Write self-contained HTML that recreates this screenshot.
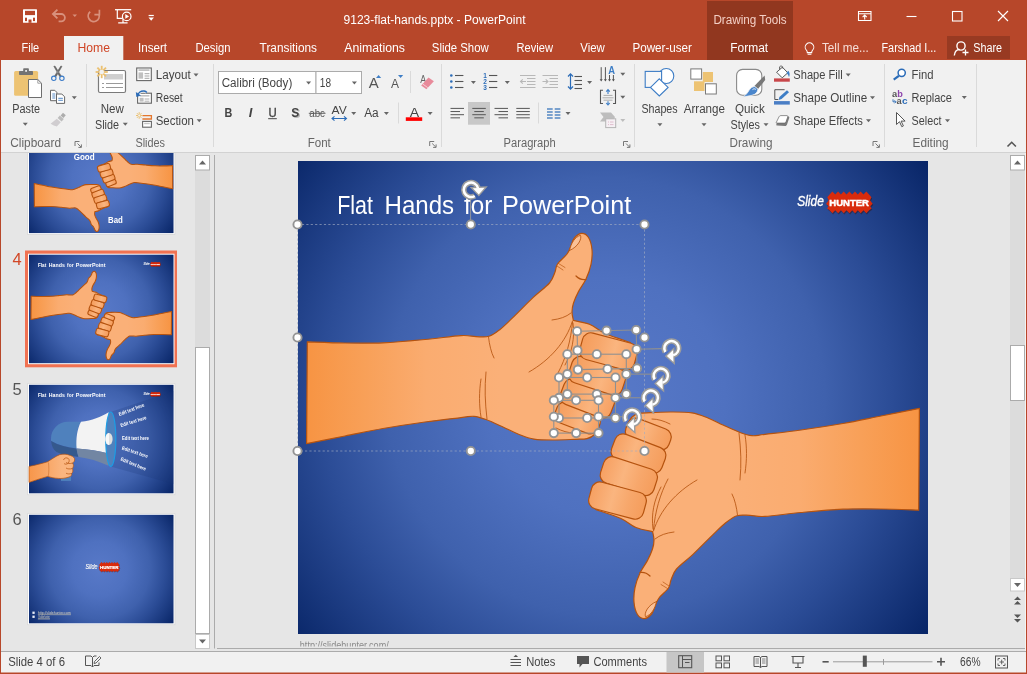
<!DOCTYPE html>
<html><head><meta charset="utf-8"><title>9123-flat-hands.pptx - PowerPoint</title>
<style>html,body{margin:0;padding:0;background:#E6E6E6;overflow:hidden}svg{display:block;will-change:transform;font-family:"Liberation Sans","DejaVu Sans",sans-serif}</style></head>
<body>
<svg width="1027" height="674" viewBox="0 0 1027 674">
<defs>
<linearGradient id="hg" gradientUnits="userSpaceOnUse" x1="307" y1="0" x2="500" y2="0">
  <stop offset="0" stop-color="#F79443"/><stop offset="0.3" stop-color="#F8A058"/><stop offset="0.62" stop-color="#FAAC70"/><stop offset="1" stop-color="#FAB078"/>
</linearGradient>
<linearGradient id="fg" gradientUnits="objectBoundingBox" x1="0" y1="0" x2="1" y2="0">
  <stop offset="0" stop-color="#F59D5C"/><stop offset="0.3" stop-color="#F7A76B"/><stop offset="0.6" stop-color="#FAB57F"/><stop offset="1" stop-color="#F6A062"/>
</linearGradient>
<radialGradient id="bg" gradientUnits="userSpaceOnUse" cx="606" cy="397" r="398">
  <stop offset="0" stop-color="#5879C8"/><stop offset="0.3" stop-color="#4F71C0"/><stop offset="0.55" stop-color="#3F61AD"/><stop offset="0.72" stop-color="#2B4C96"/><stop offset="0.86" stop-color="#1A397F"/><stop offset="1" stop-color="#082567"/>
</radialGradient>
<linearGradient id="hg5" gradientUnits="userSpaceOnUse" x1="29" y1="0" x2="62" y2="0"><stop offset="0" stop-color="#F7964A"/><stop offset="1" stop-color="#FAB57F"/></linearGradient><clipPath id="tpclip"><rect x="1" y="153" width="193" height="496"/></clipPath><clipPath id="noteclip"><rect x="216" y="636" width="800" height="10.6"/></clipPath></defs>
<rect x="0.00" y="0.00" width="1027.00" height="674.00" fill="#B7472A" />
<rect x="1.00" y="153.00" width="1025.00" height="498.50" fill="#E6E6E6" /><rect x="195.00" y="155.00" width="15.00" height="494.00" fill="#DCDCDC" /><rect x="195.50" y="155.50" width="14.00" height="14.50" fill="#fff" stroke="#ABABAB" stroke-width="1" /><path d="M199,164.5 l3.5,-4 3.5,4 z" fill="#666" /><rect x="195.50" y="347.50" width="14.00" height="286.00" fill="#fff" stroke="#ABABAB" stroke-width="1" /><rect x="195.50" y="634.50" width="14.00" height="14.00" fill="#fff" stroke="#C8C8C8" stroke-width="1" /><path d="M199,639.5 h7 l-3.5,4 z" fill="#666" /><line x1="214.50" y1="155.00" x2="214.50" y2="648.50" stroke="#ABABAB" stroke-width="1" /><line x1="217.00" y1="648.50" x2="1026.00" y2="648.50" stroke="#ABABAB" stroke-width="1" /><rect x="1010.00" y="155.00" width="15.00" height="436.00" fill="#DCDCDC" /><rect x="1010.50" y="155.50" width="14.00" height="14.50" fill="#fff" stroke="#ABABAB" stroke-width="1" /><path d="M1014,164.5 l3.5,-4 3.5,4 z" fill="#666" /><rect x="1010.50" y="345.50" width="14.00" height="55.00" fill="#fff" stroke="#ABABAB" stroke-width="1" /><rect x="1010.50" y="578.50" width="14.00" height="12.50" fill="#fff" stroke="#C8C8C8" stroke-width="1" /><path d="M1014,583 h7 l-3.5,4 z" fill="#666" /><path d="M1014,600 l3.5,-3.5 3.5,3.5 z M1014,604.5 l3.5,-3.5 3.5,3.5 z" fill="#555" /><path d="M1014,614.5 h7 l-3.5,3.5 z M1014,619 h7 l-3.5,3.5 z" fill="#555" /><g clip-path="url(#noteclip)"><text x="299.8" y="648.6" font-size="10" fill="#8A8A8A" textLength="89.0" lengthAdjust="spacingAndGlyphs" >http://slidehunter.com/</text></g>
<g clip-path="url(#tpclip)"><rect x="27.30" y="122.90" width="148.00" height="112.00" fill="#D8D8D8" /><rect x="28.00" y="123.60" width="146.50" height="110.50" fill="#fff" /><g transform="translate(29 124.60) scale(0.22937) translate(-298 -161)"><rect x="298.00" y="161.00" width="630.00" height="473.00" fill="url(#bg)" /></g><g transform="translate(34.3 183.6) scale(0.2275 -0.2275) translate(-307 -443.6)"><g stroke-linejoin="round" stroke-linecap="round"><path d="M307.3,341.8 C313.6,342.0 332.4,342.8 345.0,343.0 C357.6,343.2 369.7,343.4 383.0,342.8 C396.3,342.2 412.0,340.7 425.0,339.5 C438.0,338.3 452.5,336.1 461.0,335.6 C469.5,335.1 471.3,336.5 476.0,336.6 C480.7,336.7 485.0,337.5 489.0,336.3 C493.0,335.1 496.2,332.5 500.0,329.5 C503.8,326.5 506.5,323.7 512.0,318.4 C517.5,313.1 526.8,303.5 533.0,297.6 C539.2,291.7 545.8,287.3 549.5,283.0 C553.2,278.7 553.7,275.2 555.0,272.0 C556.3,268.8 555.5,267.0 557.5,264.0 C559.5,261.0 564.8,257.0 567.0,254.0 C569.2,251.0 569.8,248.7 571.0,246.0 C572.2,243.3 572.6,240.1 574.4,238.0 C576.2,235.9 579.4,233.5 581.7,233.4 C584.1,233.3 586.8,234.8 588.5,237.5 C590.2,240.2 591.6,245.3 592.0,249.8 C592.4,254.3 592.0,259.4 591.0,264.3 C590.0,269.2 588.1,274.5 586.0,279.0 C583.9,283.5 580.7,287.4 578.6,291.4 C576.5,295.4 574.6,299.6 573.5,303.0 C572.4,306.4 572.0,309.1 572.0,312.0 C572.0,314.9 573.2,319.0 573.4,320.4 C576.2,321.1 584.7,322.3 590.0,324.5 C595.3,326.7 598.4,330.5 605.1,333.5 C611.8,336.5 626.2,341.0 630.4,342.5 L601.4,350.0 L597.5,428.0 C597.0,429.1 596.2,432.7 594.5,434.5 C592.8,436.3 590.2,437.8 587.0,438.6 C583.8,439.4 580.7,439.1 575.4,439.3 C570.1,439.5 561.9,440.0 555.0,440.0 C548.1,440.0 540.2,440.1 534.0,439.1 C527.8,438.1 523.2,436.0 518.0,434.0 C512.8,432.0 508.3,429.4 503.0,427.0 C497.7,424.6 490.8,421.3 486.0,419.5 C481.2,417.7 478.2,416.6 474.0,416.3 C469.8,416.0 469.2,416.7 461.0,417.6 C452.8,418.6 438.0,420.2 425.0,422.0 C412.0,423.8 396.3,426.2 383.0,428.5 C369.7,430.8 357.7,433.5 345.0,436.0 C332.3,438.5 313.0,442.3 306.6,443.6 Z" fill="url(#hg)" stroke="#B5530F" stroke-width="4.6" /><rect x="554.7" y="406.9" width="46.0" height="22.0" rx="8.5" fill="url(#fg)" stroke="#B5530F" stroke-width="4.6" transform="rotate(21 577.7 417.9)"/><rect x="560.6" y="385.1" width="53.8" height="26.8" rx="8.5" fill="url(#fg)" stroke="#B5530F" stroke-width="4.6" transform="rotate(21 587.5 398.5)"/><rect x="569.2" y="362.2" width="56.0" height="27.3" rx="8.5" fill="url(#fg)" stroke="#B5530F" stroke-width="4.6" transform="rotate(18 597.2 375.8)"/><rect x="580.3" y="337.7" width="56.4" height="27.4" rx="8.5" fill="url(#fg)" stroke="#B5530F" stroke-width="4.6" transform="rotate(15 608.5 351.4)"/></g></g><g transform="translate(172.6 165.6) scale(-0.2275 0.2275) translate(-307 -341.8)"><g stroke-linejoin="round" stroke-linecap="round"><path d="M307.3,341.8 C313.6,342.0 332.4,342.8 345.0,343.0 C357.6,343.2 369.7,343.4 383.0,342.8 C396.3,342.2 412.0,340.7 425.0,339.5 C438.0,338.3 452.5,336.1 461.0,335.6 C469.5,335.1 471.3,336.5 476.0,336.6 C480.7,336.7 485.0,337.5 489.0,336.3 C493.0,335.1 496.2,332.5 500.0,329.5 C503.8,326.5 506.5,323.7 512.0,318.4 C517.5,313.1 526.8,303.5 533.0,297.6 C539.2,291.7 545.8,287.3 549.5,283.0 C553.2,278.7 553.7,275.2 555.0,272.0 C556.3,268.8 555.5,267.0 557.5,264.0 C559.5,261.0 564.8,257.0 567.0,254.0 C569.2,251.0 569.8,248.7 571.0,246.0 C572.2,243.3 572.6,240.1 574.4,238.0 C576.2,235.9 579.4,233.5 581.7,233.4 C584.1,233.3 586.8,234.8 588.5,237.5 C590.2,240.2 591.6,245.3 592.0,249.8 C592.4,254.3 592.0,259.4 591.0,264.3 C590.0,269.2 588.1,274.5 586.0,279.0 C583.9,283.5 580.7,287.4 578.6,291.4 C576.5,295.4 574.6,299.6 573.5,303.0 C572.4,306.4 572.0,309.1 572.0,312.0 C572.0,314.9 573.2,319.0 573.4,320.4 C576.2,321.1 584.7,322.3 590.0,324.5 C595.3,326.7 598.4,330.5 605.1,333.5 C611.8,336.5 626.2,341.0 630.4,342.5 L601.4,350.0 L597.5,428.0 C597.0,429.1 596.2,432.7 594.5,434.5 C592.8,436.3 590.2,437.8 587.0,438.6 C583.8,439.4 580.7,439.1 575.4,439.3 C570.1,439.5 561.9,440.0 555.0,440.0 C548.1,440.0 540.2,440.1 534.0,439.1 C527.8,438.1 523.2,436.0 518.0,434.0 C512.8,432.0 508.3,429.4 503.0,427.0 C497.7,424.6 490.8,421.3 486.0,419.5 C481.2,417.7 478.2,416.6 474.0,416.3 C469.8,416.0 469.2,416.7 461.0,417.6 C452.8,418.6 438.0,420.2 425.0,422.0 C412.0,423.8 396.3,426.2 383.0,428.5 C369.7,430.8 357.7,433.5 345.0,436.0 C332.3,438.5 313.0,442.3 306.6,443.6 Z" fill="url(#hg)" stroke="#B5530F" stroke-width="4.6" /><rect x="554.7" y="406.9" width="46.0" height="22.0" rx="8.5" fill="url(#fg)" stroke="#B5530F" stroke-width="4.6" transform="rotate(21 577.7 417.9)"/><rect x="560.6" y="385.1" width="53.8" height="26.8" rx="8.5" fill="url(#fg)" stroke="#B5530F" stroke-width="4.6" transform="rotate(21 587.5 398.5)"/><rect x="569.2" y="362.2" width="56.0" height="27.3" rx="8.5" fill="url(#fg)" stroke="#B5530F" stroke-width="4.6" transform="rotate(18 597.2 375.8)"/><rect x="580.3" y="337.7" width="56.4" height="27.4" rx="8.5" fill="url(#fg)" stroke="#B5530F" stroke-width="4.6" transform="rotate(15 608.5 351.4)"/></g></g><text x="73.7" y="159.8" font-size="8.5" fill="#fff" textLength="21.0" lengthAdjust="spacingAndGlyphs" font-weight="bold" >Good</text><text x="108.0" y="222.5" font-size="8.5" fill="#fff" textLength="14.8" lengthAdjust="spacingAndGlyphs" font-weight="bold" >Bad</text><rect x="25.00" y="250.50" width="152.00" height="116.80" fill="#F07252" /><rect x="28.00" y="253.70" width="146.50" height="110.50" fill="#fff" /><g transform="translate(29 254.70) scale(0.22937) translate(-298 -161)"><rect x="298.00" y="161.00" width="630.00" height="473.00" fill="url(#bg)" /><text y="213.7" font-size="25.5" fill="#fff" font-weight="bold"><tspan x="337.2" textLength="35.8" lengthAdjust="spacingAndGlyphs">Flat</tspan> <tspan x="384.6" textLength="69.5" lengthAdjust="spacingAndGlyphs">Hands</tspan> <tspan x="464.0" textLength="28.2" lengthAdjust="spacingAndGlyphs">for</tspan> <tspan x="502.1" textLength="129.2" lengthAdjust="spacingAndGlyphs">PowerPoint</tspan></text><g transform="translate(797.20 206.30) scale(1.0)"><text x="0.6" y="0.9" font-size="14" fill="#1A2F66" textLength="26.3" lengthAdjust="spacingAndGlyphs" font-style="italic" opacity="0.5">Slide</text><text x="0.0" y="0.0" font-size="14" fill="#fff" textLength="26.6" lengthAdjust="spacingAndGlyphs" font-style="italic" stroke="#fff" stroke-width="0.35">Slide</text><path d="M28.9,-2.5 L31.5,-6.0 L30.1,-9.0 L32.4,-11.8 L35.2,-14.8 L38.0,-11.8 L40.9,-14.8 L43.7,-11.8 L46.5,-14.8 L49.3,-11.8 L52.2,-14.8 L55.0,-11.8 L57.8,-14.8 L60.6,-11.8 L63.4,-14.8 L66.3,-11.8 L69.1,-14.8 L71.9,-11.8 L74.2,-9.0 L72.8,-6.0 L75.4,-2.5 L73.0,0.0 L74.4,2.2 L71.9,4.0 L69.1,7.0 L66.3,4.0 L63.4,7.0 L60.6,4.0 L57.8,7.0 L55.0,4.0 L52.2,7.0 L49.3,4.0 L46.5,7.0 L43.7,4.0 L40.9,7.0 L38.0,4.0 L35.2,7.0 L32.4,4.0 L29.9,2.2 L31.3,0.0 Z" fill="#3A1208" opacity="0.45" transform="translate(0.7 1.2)"/><path d="M28.9,-2.5 L31.5,-6.0 L30.1,-9.0 L32.4,-11.8 L35.2,-14.8 L38.0,-11.8 L40.9,-14.8 L43.7,-11.8 L46.5,-14.8 L49.3,-11.8 L52.2,-14.8 L55.0,-11.8 L57.8,-14.8 L60.6,-11.8 L63.4,-14.8 L66.3,-11.8 L69.1,-14.8 L71.9,-11.8 L74.2,-9.0 L72.8,-6.0 L75.4,-2.5 L73.0,0.0 L74.4,2.2 L71.9,4.0 L69.1,7.0 L66.3,4.0 L63.4,7.0 L60.6,4.0 L57.8,7.0 L55.0,4.0 L52.2,7.0 L49.3,4.0 L46.5,7.0 L43.7,4.0 L40.9,7.0 L38.0,4.0 L35.2,7.0 L32.4,4.0 L29.9,2.2 L31.3,0.0 Z" fill="#D92B0C" /><text x="32.1" y="0.0" font-size="9.6" fill="#fff" textLength="39.6" lengthAdjust="spacingAndGlyphs" font-weight="bold" stroke="#fff" stroke-width="0.5">HUNTER</text></g><g stroke-linejoin="round" stroke-linecap="round"><path d="M307.3,341.8 C313.6,342.0 332.4,342.8 345.0,343.0 C357.6,343.2 369.7,343.4 383.0,342.8 C396.3,342.2 412.0,340.7 425.0,339.5 C438.0,338.3 452.5,336.1 461.0,335.6 C469.5,335.1 471.3,336.5 476.0,336.6 C480.7,336.7 485.0,337.5 489.0,336.3 C493.0,335.1 496.2,332.5 500.0,329.5 C503.8,326.5 506.5,323.7 512.0,318.4 C517.5,313.1 526.8,303.5 533.0,297.6 C539.2,291.7 545.8,287.3 549.5,283.0 C553.2,278.7 553.7,275.2 555.0,272.0 C556.3,268.8 555.5,267.0 557.5,264.0 C559.5,261.0 564.8,257.0 567.0,254.0 C569.2,251.0 569.8,248.7 571.0,246.0 C572.2,243.3 572.6,240.1 574.4,238.0 C576.2,235.9 579.4,233.5 581.7,233.4 C584.1,233.3 586.8,234.8 588.5,237.5 C590.2,240.2 591.6,245.3 592.0,249.8 C592.4,254.3 592.0,259.4 591.0,264.3 C590.0,269.2 588.1,274.5 586.0,279.0 C583.9,283.5 580.7,287.4 578.6,291.4 C576.5,295.4 574.6,299.6 573.5,303.0 C572.4,306.4 572.0,309.1 572.0,312.0 C572.0,314.9 573.2,319.0 573.4,320.4 C576.2,321.1 584.7,322.3 590.0,324.5 C595.3,326.7 598.4,330.5 605.1,333.5 C611.8,336.5 626.2,341.0 630.4,342.5 L601.4,350.0 L597.5,428.0 C597.0,429.1 596.2,432.7 594.5,434.5 C592.8,436.3 590.2,437.8 587.0,438.6 C583.8,439.4 580.7,439.1 575.4,439.3 C570.1,439.5 561.9,440.0 555.0,440.0 C548.1,440.0 540.2,440.1 534.0,439.1 C527.8,438.1 523.2,436.0 518.0,434.0 C512.8,432.0 508.3,429.4 503.0,427.0 C497.7,424.6 490.8,421.3 486.0,419.5 C481.2,417.7 478.2,416.6 474.0,416.3 C469.8,416.0 469.2,416.7 461.0,417.6 C452.8,418.6 438.0,420.2 425.0,422.0 C412.0,423.8 396.3,426.2 383.0,428.5 C369.7,430.8 357.7,433.5 345.0,436.0 C332.3,438.5 313.0,442.3 306.6,443.6 Z" fill="url(#hg)" stroke="#B5530F" stroke-width="4.6" /><rect x="554.7" y="406.9" width="46.0" height="22.0" rx="8.5" fill="url(#fg)" stroke="#B5530F" stroke-width="4.6" transform="rotate(21 577.7 417.9)"/><rect x="560.6" y="385.1" width="53.8" height="26.8" rx="8.5" fill="url(#fg)" stroke="#B5530F" stroke-width="4.6" transform="rotate(21 587.5 398.5)"/><rect x="569.2" y="362.2" width="56.0" height="27.3" rx="8.5" fill="url(#fg)" stroke="#B5530F" stroke-width="4.6" transform="rotate(18 597.2 375.8)"/><rect x="580.3" y="337.7" width="56.4" height="27.4" rx="8.5" fill="url(#fg)" stroke="#B5530F" stroke-width="4.6" transform="rotate(15 608.5 351.4)"/></g><g transform="rotate(180 613 426)"><g stroke-linejoin="round" stroke-linecap="round"><path d="M307.3,341.8 C313.6,342.0 332.4,342.8 345.0,343.0 C357.6,343.2 369.7,343.4 383.0,342.8 C396.3,342.2 412.0,340.7 425.0,339.5 C438.0,338.3 452.5,336.1 461.0,335.6 C469.5,335.1 471.3,336.5 476.0,336.6 C480.7,336.7 485.0,337.5 489.0,336.3 C493.0,335.1 496.2,332.5 500.0,329.5 C503.8,326.5 506.5,323.7 512.0,318.4 C517.5,313.1 526.8,303.5 533.0,297.6 C539.2,291.7 545.8,287.3 549.5,283.0 C553.2,278.7 553.7,275.2 555.0,272.0 C556.3,268.8 555.5,267.0 557.5,264.0 C559.5,261.0 564.8,257.0 567.0,254.0 C569.2,251.0 569.8,248.7 571.0,246.0 C572.2,243.3 572.6,240.1 574.4,238.0 C576.2,235.9 579.4,233.5 581.7,233.4 C584.1,233.3 586.8,234.8 588.5,237.5 C590.2,240.2 591.6,245.3 592.0,249.8 C592.4,254.3 592.0,259.4 591.0,264.3 C590.0,269.2 588.1,274.5 586.0,279.0 C583.9,283.5 580.7,287.4 578.6,291.4 C576.5,295.4 574.6,299.6 573.5,303.0 C572.4,306.4 572.0,309.1 572.0,312.0 C572.0,314.9 573.2,319.0 573.4,320.4 C576.2,321.1 584.7,322.3 590.0,324.5 C595.3,326.7 598.4,330.5 605.1,333.5 C611.8,336.5 626.2,341.0 630.4,342.5 L601.4,350.0 L597.5,428.0 C597.0,429.1 596.2,432.7 594.5,434.5 C592.8,436.3 590.2,437.8 587.0,438.6 C583.8,439.4 580.7,439.1 575.4,439.3 C570.1,439.5 561.9,440.0 555.0,440.0 C548.1,440.0 540.2,440.1 534.0,439.1 C527.8,438.1 523.2,436.0 518.0,434.0 C512.8,432.0 508.3,429.4 503.0,427.0 C497.7,424.6 490.8,421.3 486.0,419.5 C481.2,417.7 478.2,416.6 474.0,416.3 C469.8,416.0 469.2,416.7 461.0,417.6 C452.8,418.6 438.0,420.2 425.0,422.0 C412.0,423.8 396.3,426.2 383.0,428.5 C369.7,430.8 357.7,433.5 345.0,436.0 C332.3,438.5 313.0,442.3 306.6,443.6 Z" fill="url(#hg)" stroke="#B5530F" stroke-width="4.6" /><rect x="554.7" y="406.9" width="46.0" height="22.0" rx="8.5" fill="url(#fg)" stroke="#B5530F" stroke-width="4.6" transform="rotate(21 577.7 417.9)"/><rect x="560.6" y="385.1" width="53.8" height="26.8" rx="8.5" fill="url(#fg)" stroke="#B5530F" stroke-width="4.6" transform="rotate(21 587.5 398.5)"/><rect x="569.2" y="362.2" width="56.0" height="27.3" rx="8.5" fill="url(#fg)" stroke="#B5530F" stroke-width="4.6" transform="rotate(18 597.2 375.8)"/><rect x="580.3" y="337.7" width="56.4" height="27.4" rx="8.5" fill="url(#fg)" stroke="#B5530F" stroke-width="4.6" transform="rotate(15 608.5 351.4)"/></g></g></g><rect x="27.30" y="383.10" width="148.00" height="112.00" fill="#D8D8D8" /><rect x="28.00" y="383.80" width="146.50" height="110.50" fill="#fff" /><g transform="translate(29 384.80) scale(0.22937) translate(-298 -161)"><rect x="298.00" y="161.00" width="630.00" height="473.00" fill="url(#bg)" /><text y="213.7" font-size="25.5" fill="#fff" font-weight="bold"><tspan x="337.2" textLength="35.8" lengthAdjust="spacingAndGlyphs">Flat</tspan> <tspan x="384.6" textLength="69.5" lengthAdjust="spacingAndGlyphs">Hands</tspan> <tspan x="464.0" textLength="28.2" lengthAdjust="spacingAndGlyphs">for</tspan> <tspan x="502.1" textLength="129.2" lengthAdjust="spacingAndGlyphs">PowerPoint</tspan></text><g transform="translate(797.20 206.30) scale(1.0)"><text x="0.6" y="0.9" font-size="14" fill="#1A2F66" textLength="26.3" lengthAdjust="spacingAndGlyphs" font-style="italic" opacity="0.5">Slide</text><text x="0.0" y="0.0" font-size="14" fill="#fff" textLength="26.6" lengthAdjust="spacingAndGlyphs" font-style="italic" stroke="#fff" stroke-width="0.35">Slide</text><path d="M28.9,-2.5 L31.5,-6.0 L30.1,-9.0 L32.4,-11.8 L35.2,-14.8 L38.0,-11.8 L40.9,-14.8 L43.7,-11.8 L46.5,-14.8 L49.3,-11.8 L52.2,-14.8 L55.0,-11.8 L57.8,-14.8 L60.6,-11.8 L63.4,-14.8 L66.3,-11.8 L69.1,-14.8 L71.9,-11.8 L74.2,-9.0 L72.8,-6.0 L75.4,-2.5 L73.0,0.0 L74.4,2.2 L71.9,4.0 L69.1,7.0 L66.3,4.0 L63.4,7.0 L60.6,4.0 L57.8,7.0 L55.0,4.0 L52.2,7.0 L49.3,4.0 L46.5,7.0 L43.7,4.0 L40.9,7.0 L38.0,4.0 L35.2,7.0 L32.4,4.0 L29.9,2.2 L31.3,0.0 Z" fill="#3A1208" opacity="0.45" transform="translate(0.7 1.2)"/><path d="M28.9,-2.5 L31.5,-6.0 L30.1,-9.0 L32.4,-11.8 L35.2,-14.8 L38.0,-11.8 L40.9,-14.8 L43.7,-11.8 L46.5,-14.8 L49.3,-11.8 L52.2,-14.8 L55.0,-11.8 L57.8,-14.8 L60.6,-11.8 L63.4,-14.8 L66.3,-11.8 L69.1,-14.8 L71.9,-11.8 L74.2,-9.0 L72.8,-6.0 L75.4,-2.5 L73.0,0.0 L74.4,2.2 L71.9,4.0 L69.1,7.0 L66.3,4.0 L63.4,7.0 L60.6,4.0 L57.8,7.0 L55.0,4.0 L52.2,7.0 L49.3,4.0 L46.5,7.0 L43.7,4.0 L40.9,7.0 L38.0,4.0 L35.2,7.0 L32.4,4.0 L29.9,2.2 L31.3,0.0 Z" fill="#D92B0C" /><text x="32.1" y="0.0" font-size="9.6" fill="#fff" textLength="39.6" lengthAdjust="spacingAndGlyphs" font-weight="bold" stroke="#fff" stroke-width="0.5">HUNTER</text></g></g><path d="M110.5,412 L173.5,391 L173.5,484 L110.5,466.5 Z" fill="#1B3578" opacity="0.22"/><path d="M81,421.7 h-13 c-9.5,0 -17,7.5 -17,17 c0,1 0,1.6 0.1,2.2 c8,4.5 17,6.5 26.5,7.5 c-2,-9 -1.5,-19 3.4,-26.7 z" fill="#4F81BD" /><path d="M51.1,440.9 c0.6,5 2,8.5 5.5,11 c6,3.2 14,3.8 22,5 c-1,-3 -1.6,-5.5 -2,-8.5 c-9.5,-1 -18,-3 -25.5,-7.5 z" fill="#35598D" /><path d="M81,421.7 C92,420.5 101,417 108.6,412.2 L108.6,453.5 C99,450.5 88,449.5 76.6,448.4 C75.8,439 77,429 81,421.7 Z" fill="#F3F3F3" /><path d="M76.6,448.4 C88,449.5 99,450.5 108.6,453.5 L108.6,465.8 C99,461 88,458 78.6,456.9 C77.5,454 76.9,451 76.6,448.4 Z" fill="#7286A3" /><ellipse cx="110.8" cy="439.2" rx="5" ry="27.2" fill="#4F81BD" stroke="#1C9DE4" stroke-width="1.2"/><ellipse cx="109" cy="439" rx="3.6" ry="6" fill="#E0E0E0"/><path d="M109,433 a3.6,6 0 0 0 0,12 z" fill="#F8F8F8" /><rect x="61.00" y="476.00" width="10.00" height="4.90" fill="#4F81BD" /><g stroke="#B5530F" stroke-width="0.7" stroke-linejoin="round"><path d="M29,466.4 C36,465 42,463.5 47.7,461.7 C52,459 56,456 59.7,454.7 C63,453.8 67,454 70.4,455.5 C73.5,456.5 75,458.2 74.6,460 C74.4,461.5 73.5,462.5 72.5,463 C73.8,464.5 73.8,467 72.3,468.5 C73.3,470 73,472.5 71.5,473.5 C72,475 71,476.5 69,477 C65,478.5 61,478.6 58.4,478.4 C54,478.2 51,477.4 47.7,476.4 C41,478.3 35,480.4 29,482.4 Z" fill="url(#hg5)" /><path d="M72.5,463 C70,464 67.5,463.5 66,462.5 M72.3,468.5 C70,469.3 67.5,469 66,468 M71.5,473.5 C69.5,474.2 67.5,474 66,473.2" fill="none" /><path d="M63.5,460 c0.5,-2 3,-2.8 4.8,-1.5 c1.2,1 1.2,3 0,4.5 c-1.2,1.3 -3,1.6 -4.2,0.6" fill="none" /><path d="M48.5,462.5 C49,467 49,472 48.3,476" fill="none" stroke-width="0.4"/></g><text x="119.5" y="416.0" font-size="5" font-weight="bold" fill="#fff" textLength="27" lengthAdjust="spacingAndGlyphs" transform="rotate(-21 119.5 416.0)">Edit text here</text><text x="121.0" y="427.0" font-size="5" font-weight="bold" fill="#fff" textLength="27" lengthAdjust="spacingAndGlyphs" transform="rotate(-17 121.0 427.0)">Edit text here</text><text x="122.0" y="439.6" font-size="5" font-weight="bold" fill="#fff" textLength="27" lengthAdjust="spacingAndGlyphs" transform="rotate(0 122.0 439.6)">Edit text here</text><text x="121.6" y="449.4" font-size="5" font-weight="bold" fill="#fff" textLength="27" lengthAdjust="spacingAndGlyphs" transform="rotate(18.6 121.6 449.4)">Edit text here</text><text x="120.2" y="460.3" font-size="5" font-weight="bold" fill="#fff" textLength="27" lengthAdjust="spacingAndGlyphs" transform="rotate(22.7 120.2 460.3)">Edit text here</text><rect x="27.30" y="513.10" width="148.00" height="112.00" fill="#D8D8D8" /><rect x="28.00" y="513.80" width="146.50" height="110.50" fill="#fff" /><g transform="translate(29 514.80) scale(0.22937) translate(-298 -161)"><rect x="298.00" y="161.00" width="630.00" height="473.00" fill="url(#bg)" /></g><g transform="translate(85.40 568.80) scale(0.459)"><text x="0.6" y="0.9" font-size="14" fill="#1A2F66" textLength="26.3" lengthAdjust="spacingAndGlyphs" font-style="italic" opacity="0.5">Slide</text><text x="0.0" y="0.0" font-size="14" fill="#fff" textLength="26.6" lengthAdjust="spacingAndGlyphs" font-style="italic" stroke="#fff" stroke-width="0.35">Slide</text><path d="M28.9,-2.5 L31.5,-6.0 L30.1,-9.0 L32.4,-11.8 L35.2,-14.8 L38.0,-11.8 L40.9,-14.8 L43.7,-11.8 L46.5,-14.8 L49.3,-11.8 L52.2,-14.8 L55.0,-11.8 L57.8,-14.8 L60.6,-11.8 L63.4,-14.8 L66.3,-11.8 L69.1,-14.8 L71.9,-11.8 L74.2,-9.0 L72.8,-6.0 L75.4,-2.5 L73.0,0.0 L74.4,2.2 L71.9,4.0 L69.1,7.0 L66.3,4.0 L63.4,7.0 L60.6,4.0 L57.8,7.0 L55.0,4.0 L52.2,7.0 L49.3,4.0 L46.5,7.0 L43.7,4.0 L40.9,7.0 L38.0,4.0 L35.2,7.0 L32.4,4.0 L29.9,2.2 L31.3,0.0 Z" fill="#3A1208" opacity="0.45" transform="translate(0.7 1.2)"/><path d="M28.9,-2.5 L31.5,-6.0 L30.1,-9.0 L32.4,-11.8 L35.2,-14.8 L38.0,-11.8 L40.9,-14.8 L43.7,-11.8 L46.5,-14.8 L49.3,-11.8 L52.2,-14.8 L55.0,-11.8 L57.8,-14.8 L60.6,-11.8 L63.4,-14.8 L66.3,-11.8 L69.1,-14.8 L71.9,-11.8 L74.2,-9.0 L72.8,-6.0 L75.4,-2.5 L73.0,0.0 L74.4,2.2 L71.9,4.0 L69.1,7.0 L66.3,4.0 L63.4,7.0 L60.6,4.0 L57.8,7.0 L55.0,4.0 L52.2,7.0 L49.3,4.0 L46.5,7.0 L43.7,4.0 L40.9,7.0 L38.0,4.0 L35.2,7.0 L32.4,4.0 L29.9,2.2 L31.3,0.0 Z" fill="#D92B0C" /><text x="32.1" y="0.0" font-size="9.6" fill="#fff" textLength="39.6" lengthAdjust="spacingAndGlyphs" font-weight="bold" stroke="#fff" stroke-width="0.5">HUNTER</text></g><rect x="32.40" y="611.60" width="2.30" height="2.30" fill="#E8ECF5" /><rect x="32.40" y="615.60" width="2.30" height="2.30" fill="#E8ECF5" /><text x="37.9" y="613.8" font-size="3" fill="#D5D0C0" textLength="33.0" lengthAdjust="spacingAndGlyphs" text-decoration="underline">http://slidehunter.com</text><text x="37.9" y="618.0" font-size="3" fill="#D5D0C0" textLength="12.0" lengthAdjust="spacingAndGlyphs" text-decoration="underline">@slidehunter</text><line x1="37.90" y1="614.30" x2="71.00" y2="614.30" stroke="#C9C2A8" stroke-width="0.5" /><line x1="37.90" y1="618.50" x2="50.00" y2="618.50" stroke="#C9C2A8" stroke-width="0.5" /></g><text x="12.5" y="265.0" font-size="16.5" fill="#D24726" >4</text><text x="12.5" y="395.0" font-size="16.5" fill="#555" >5</text><text x="12.5" y="525.0" font-size="16.5" fill="#555" >6</text>
<rect x="298.00" y="161.00" width="630.00" height="473.00" fill="url(#bg)" /><text y="213.7" font-size="25" fill="#fff"><tspan x="337.2" textLength="35.8" lengthAdjust="spacingAndGlyphs">Flat</tspan> <tspan x="384.6" textLength="69.5" lengthAdjust="spacingAndGlyphs">Hands</tspan> <tspan x="464.0" textLength="28.2" lengthAdjust="spacingAndGlyphs">for</tspan> <tspan x="502.1" textLength="129.2" lengthAdjust="spacingAndGlyphs">PowerPoint</tspan></text><g transform="translate(797.20 206.30) scale(1.0)"><text x="0.6" y="0.9" font-size="14" fill="#1A2F66" textLength="26.3" lengthAdjust="spacingAndGlyphs" font-style="italic" opacity="0.5">Slide</text><text x="0.0" y="0.0" font-size="14" fill="#fff" textLength="26.6" lengthAdjust="spacingAndGlyphs" font-style="italic" stroke="#fff" stroke-width="0.35">Slide</text><path d="M28.9,-2.5 L31.5,-6.0 L30.1,-9.0 L32.4,-11.8 L35.2,-14.8 L38.0,-11.8 L40.9,-14.8 L43.7,-11.8 L46.5,-14.8 L49.3,-11.8 L52.2,-14.8 L55.0,-11.8 L57.8,-14.8 L60.6,-11.8 L63.4,-14.8 L66.3,-11.8 L69.1,-14.8 L71.9,-11.8 L74.2,-9.0 L72.8,-6.0 L75.4,-2.5 L73.0,0.0 L74.4,2.2 L71.9,4.0 L69.1,7.0 L66.3,4.0 L63.4,7.0 L60.6,4.0 L57.8,7.0 L55.0,4.0 L52.2,7.0 L49.3,4.0 L46.5,7.0 L43.7,4.0 L40.9,7.0 L38.0,4.0 L35.2,7.0 L32.4,4.0 L29.9,2.2 L31.3,0.0 Z" fill="#3A1208" opacity="0.45" transform="translate(0.7 1.2)"/><path d="M28.9,-2.5 L31.5,-6.0 L30.1,-9.0 L32.4,-11.8 L35.2,-14.8 L38.0,-11.8 L40.9,-14.8 L43.7,-11.8 L46.5,-14.8 L49.3,-11.8 L52.2,-14.8 L55.0,-11.8 L57.8,-14.8 L60.6,-11.8 L63.4,-14.8 L66.3,-11.8 L69.1,-14.8 L71.9,-11.8 L74.2,-9.0 L72.8,-6.0 L75.4,-2.5 L73.0,0.0 L74.4,2.2 L71.9,4.0 L69.1,7.0 L66.3,4.0 L63.4,7.0 L60.6,4.0 L57.8,7.0 L55.0,4.0 L52.2,7.0 L49.3,4.0 L46.5,7.0 L43.7,4.0 L40.9,7.0 L38.0,4.0 L35.2,7.0 L32.4,4.0 L29.9,2.2 L31.3,0.0 Z" fill="#D92B0C" /><text x="32.1" y="0.0" font-size="9.6" fill="#fff" textLength="39.6" lengthAdjust="spacingAndGlyphs" font-weight="bold" stroke="#fff" stroke-width="0.5">HUNTER</text></g><g stroke-linejoin="round" stroke-linecap="round"><path d="M307.3,341.8 C313.6,342.0 332.4,342.8 345.0,343.0 C357.6,343.2 369.7,343.4 383.0,342.8 C396.3,342.2 412.0,340.7 425.0,339.5 C438.0,338.3 452.5,336.1 461.0,335.6 C469.5,335.1 471.3,336.5 476.0,336.6 C480.7,336.7 485.0,337.5 489.0,336.3 C493.0,335.1 496.2,332.5 500.0,329.5 C503.8,326.5 506.5,323.7 512.0,318.4 C517.5,313.1 526.8,303.5 533.0,297.6 C539.2,291.7 545.8,287.3 549.5,283.0 C553.2,278.7 553.7,275.2 555.0,272.0 C556.3,268.8 555.5,267.0 557.5,264.0 C559.5,261.0 564.8,257.0 567.0,254.0 C569.2,251.0 569.8,248.7 571.0,246.0 C572.2,243.3 572.6,240.1 574.4,238.0 C576.2,235.9 579.4,233.5 581.7,233.4 C584.1,233.3 586.8,234.8 588.5,237.5 C590.2,240.2 591.6,245.3 592.0,249.8 C592.4,254.3 592.0,259.4 591.0,264.3 C590.0,269.2 588.1,274.5 586.0,279.0 C583.9,283.5 580.7,287.4 578.6,291.4 C576.5,295.4 574.6,299.6 573.5,303.0 C572.4,306.4 572.0,309.1 572.0,312.0 C572.0,314.9 573.2,319.0 573.4,320.4 C576.2,321.1 584.7,322.3 590.0,324.5 C595.3,326.7 598.4,330.5 605.1,333.5 C611.8,336.5 626.2,341.0 630.4,342.5 L601.4,350.0 L597.5,428.0 C597.0,429.1 596.2,432.7 594.5,434.5 C592.8,436.3 590.2,437.8 587.0,438.6 C583.8,439.4 580.7,439.1 575.4,439.3 C570.1,439.5 561.9,440.0 555.0,440.0 C548.1,440.0 540.2,440.1 534.0,439.1 C527.8,438.1 523.2,436.0 518.0,434.0 C512.8,432.0 508.3,429.4 503.0,427.0 C497.7,424.6 490.8,421.3 486.0,419.5 C481.2,417.7 478.2,416.6 474.0,416.3 C469.8,416.0 469.2,416.7 461.0,417.6 C452.8,418.6 438.0,420.2 425.0,422.0 C412.0,423.8 396.3,426.2 383.0,428.5 C369.7,430.8 357.7,433.5 345.0,436.0 C332.3,438.5 313.0,442.3 306.6,443.6 Z" fill="url(#hg)" stroke="#B5530F" stroke-width="1.2" /><rect x="554.7" y="406.9" width="46.0" height="22.0" rx="8.5" fill="url(#fg)" stroke="#B5530F" stroke-width="1.2" transform="rotate(21 577.7 417.9)"/><rect x="560.6" y="385.1" width="53.8" height="26.8" rx="8.5" fill="url(#fg)" stroke="#B5530F" stroke-width="1.2" transform="rotate(21 587.5 398.5)"/><rect x="569.2" y="362.2" width="56.0" height="27.3" rx="8.5" fill="url(#fg)" stroke="#B5530F" stroke-width="1.2" transform="rotate(18 597.2 375.8)"/><rect x="580.3" y="337.7" width="56.4" height="27.4" rx="8.5" fill="url(#fg)" stroke="#B5530F" stroke-width="1.2" transform="rotate(15 608.5 351.4)"/><path d="M488.5,337 C489.5,345 491,352 494,358" fill="none" stroke="#B5530F" stroke-width="0.84" /><path d="M481,379 C479,392 479,405 481,417" fill="none" stroke="#B5530F" stroke-width="0.84" /><path d="M486,372 C484.5,388 485,402 487,419" fill="none" stroke="#B5530F" stroke-width="0.84" /><path d="M572.5,321 C566,342 550,360 529,372" fill="none" stroke="#B5530F" stroke-width="0.84" /><path d="M572.5,322 C571,340 566,358 558,373" fill="none" stroke="#B5530F" stroke-width="0.84" /><path d="M573,323 C575,338 572,352 565,365" fill="none" stroke="#B5530F" stroke-width="0.84" /><path d="M552,320 C560,319 566,317 571,313" fill="none" stroke="#B5530F" stroke-width="0.84" /><path d="M576,276 C579,279 583,280 586,279.5" fill="none" stroke="#B5530F" stroke-width="1.2" /><path d="M557,266 L563,270 M558.5,263.5 L565,267.5" fill="none" stroke="#B5530F" stroke-width="0.672" /><path d="M569.5,250.5 C571,243 575,237 580.5,235.3 C582,239 578,247 569.5,250.5" fill="#FBC197" stroke="#B5530F" stroke-width="0.84" /><path d="M556,428 C562,431 568,433 574,433" fill="none" stroke="#B5530F" stroke-width="0.84" /></g><g transform="rotate(180 613 426)"><g stroke-linejoin="round" stroke-linecap="round"><path d="M307.3,341.8 C313.6,342.0 332.4,342.8 345.0,343.0 C357.6,343.2 369.7,343.4 383.0,342.8 C396.3,342.2 412.0,340.7 425.0,339.5 C438.0,338.3 452.5,336.1 461.0,335.6 C469.5,335.1 471.3,336.5 476.0,336.6 C480.7,336.7 485.0,337.5 489.0,336.3 C493.0,335.1 496.2,332.5 500.0,329.5 C503.8,326.5 506.5,323.7 512.0,318.4 C517.5,313.1 526.8,303.5 533.0,297.6 C539.2,291.7 545.8,287.3 549.5,283.0 C553.2,278.7 553.7,275.2 555.0,272.0 C556.3,268.8 555.5,267.0 557.5,264.0 C559.5,261.0 564.8,257.0 567.0,254.0 C569.2,251.0 569.8,248.7 571.0,246.0 C572.2,243.3 572.6,240.1 574.4,238.0 C576.2,235.9 579.4,233.5 581.7,233.4 C584.1,233.3 586.8,234.8 588.5,237.5 C590.2,240.2 591.6,245.3 592.0,249.8 C592.4,254.3 592.0,259.4 591.0,264.3 C590.0,269.2 588.1,274.5 586.0,279.0 C583.9,283.5 580.7,287.4 578.6,291.4 C576.5,295.4 574.6,299.6 573.5,303.0 C572.4,306.4 572.0,309.1 572.0,312.0 C572.0,314.9 573.2,319.0 573.4,320.4 C576.2,321.1 584.7,322.3 590.0,324.5 C595.3,326.7 598.4,330.5 605.1,333.5 C611.8,336.5 626.2,341.0 630.4,342.5 L601.4,350.0 L597.5,428.0 C597.0,429.1 596.2,432.7 594.5,434.5 C592.8,436.3 590.2,437.8 587.0,438.6 C583.8,439.4 580.7,439.1 575.4,439.3 C570.1,439.5 561.9,440.0 555.0,440.0 C548.1,440.0 540.2,440.1 534.0,439.1 C527.8,438.1 523.2,436.0 518.0,434.0 C512.8,432.0 508.3,429.4 503.0,427.0 C497.7,424.6 490.8,421.3 486.0,419.5 C481.2,417.7 478.2,416.6 474.0,416.3 C469.8,416.0 469.2,416.7 461.0,417.6 C452.8,418.6 438.0,420.2 425.0,422.0 C412.0,423.8 396.3,426.2 383.0,428.5 C369.7,430.8 357.7,433.5 345.0,436.0 C332.3,438.5 313.0,442.3 306.6,443.6 Z" fill="url(#hg)" stroke="#B5530F" stroke-width="1.2" /><rect x="554.7" y="406.9" width="46.0" height="22.0" rx="8.5" fill="url(#fg)" stroke="#B5530F" stroke-width="1.2" transform="rotate(21 577.7 417.9)"/><rect x="560.6" y="385.1" width="53.8" height="26.8" rx="8.5" fill="url(#fg)" stroke="#B5530F" stroke-width="1.2" transform="rotate(21 587.5 398.5)"/><rect x="569.2" y="362.2" width="56.0" height="27.3" rx="8.5" fill="url(#fg)" stroke="#B5530F" stroke-width="1.2" transform="rotate(18 597.2 375.8)"/><rect x="580.3" y="337.7" width="56.4" height="27.4" rx="8.5" fill="url(#fg)" stroke="#B5530F" stroke-width="1.2" transform="rotate(15 608.5 351.4)"/><path d="M488.5,337 C489.5,345 491,352 494,358" fill="none" stroke="#B5530F" stroke-width="0.84" /><path d="M481,379 C479,392 479,405 481,417" fill="none" stroke="#B5530F" stroke-width="0.84" /><path d="M486,372 C484.5,388 485,402 487,419" fill="none" stroke="#B5530F" stroke-width="0.84" /><path d="M572.5,321 C566,342 550,360 529,372" fill="none" stroke="#B5530F" stroke-width="0.84" /><path d="M572.5,322 C571,340 566,358 558,373" fill="none" stroke="#B5530F" stroke-width="0.84" /><path d="M573,323 C575,338 572,352 565,365" fill="none" stroke="#B5530F" stroke-width="0.84" /><path d="M552,320 C560,319 566,317 571,313" fill="none" stroke="#B5530F" stroke-width="0.84" /><path d="M576,276 C579,279 583,280 586,279.5" fill="none" stroke="#B5530F" stroke-width="1.2" /><path d="M557,266 L563,270 M558.5,263.5 L565,267.5" fill="none" stroke="#B5530F" stroke-width="0.672" /><path d="M569.5,250.5 C571,243 575,237 580.5,235.3 C582,239 578,247 569.5,250.5" fill="#FBC197" stroke="#B5530F" stroke-width="0.84" /><path d="M556,428 C562,431 568,433 574,433" fill="none" stroke="#B5530F" stroke-width="0.84" /></g></g>
<g><rect x="297.50" y="224.50" width="347.00" height="226.50" fill="none" stroke="#A4ADC2" stroke-width="0.65" stroke-dasharray="2.2 2.2"/><g transform="rotate(-1.2 607.0 349.8)"><rect x="577.50" y="330.60" width="59.10" height="38.40" fill="none" stroke="#909090" stroke-width="1.1" /><line x1="636.60" y1="349.80" x2="661.60" y2="349.80" stroke="#909090" stroke-width="1.1" /></g><g transform="rotate(0 596.8 374.1)"><rect x="567.30" y="354.20" width="59.00" height="39.90" fill="none" stroke="#909090" stroke-width="1.1" /><line x1="626.30" y1="374.15" x2="651.30" y2="374.15" stroke="#909090" stroke-width="1.1" /></g><g transform="rotate(0 587.2 397.8)"><rect x="559.00" y="377.50" width="56.50" height="40.50" fill="none" stroke="#909090" stroke-width="1.1" /><line x1="615.50" y1="397.75" x2="640.50" y2="397.75" stroke="#909090" stroke-width="1.1" /></g><g transform="rotate(0 576.1 416.7)"><rect x="553.80" y="400.30" width="44.70" height="32.80" fill="none" stroke="#909090" stroke-width="1.1" /><line x1="598.50" y1="416.70" x2="623.50" y2="416.70" stroke="#909090" stroke-width="1.1" /></g><circle cx="577.1" cy="331.2" r="4.1" fill="#fff" stroke="#939393" stroke-width="1.9"/><circle cx="577.5" cy="350.4" r="4.1" fill="#fff" stroke="#939393" stroke-width="1.9"/><circle cx="577.9" cy="369.6" r="4.1" fill="#fff" stroke="#939393" stroke-width="1.9"/><circle cx="606.6" cy="330.6" r="4.1" fill="#fff" stroke="#939393" stroke-width="1.9"/><circle cx="607.5" cy="369.0" r="4.1" fill="#fff" stroke="#939393" stroke-width="1.9"/><circle cx="636.2" cy="330.0" r="4.1" fill="#fff" stroke="#939393" stroke-width="1.9"/><circle cx="636.6" cy="349.2" r="4.1" fill="#fff" stroke="#939393" stroke-width="1.9"/><circle cx="637.0" cy="368.4" r="4.1" fill="#fff" stroke="#939393" stroke-width="1.9"/><circle cx="567.3" cy="354.2" r="4.1" fill="#fff" stroke="#939393" stroke-width="1.9"/><circle cx="567.3" cy="374.1" r="4.1" fill="#fff" stroke="#939393" stroke-width="1.9"/><circle cx="567.3" cy="394.1" r="4.1" fill="#fff" stroke="#939393" stroke-width="1.9"/><circle cx="596.8" cy="354.2" r="4.1" fill="#fff" stroke="#939393" stroke-width="1.9"/><circle cx="596.8" cy="394.1" r="4.1" fill="#fff" stroke="#939393" stroke-width="1.9"/><circle cx="626.3" cy="354.2" r="4.1" fill="#fff" stroke="#939393" stroke-width="1.9"/><circle cx="626.3" cy="374.1" r="4.1" fill="#fff" stroke="#939393" stroke-width="1.9"/><circle cx="626.3" cy="394.1" r="4.1" fill="#fff" stroke="#939393" stroke-width="1.9"/><circle cx="559.0" cy="377.5" r="4.1" fill="#fff" stroke="#939393" stroke-width="1.9"/><circle cx="559.0" cy="397.8" r="4.1" fill="#fff" stroke="#939393" stroke-width="1.9"/><circle cx="559.0" cy="418.0" r="4.1" fill="#fff" stroke="#939393" stroke-width="1.9"/><circle cx="587.2" cy="377.5" r="4.1" fill="#fff" stroke="#939393" stroke-width="1.9"/><circle cx="587.2" cy="418.0" r="4.1" fill="#fff" stroke="#939393" stroke-width="1.9"/><circle cx="615.5" cy="377.5" r="4.1" fill="#fff" stroke="#939393" stroke-width="1.9"/><circle cx="615.5" cy="397.8" r="4.1" fill="#fff" stroke="#939393" stroke-width="1.9"/><circle cx="615.5" cy="418.0" r="4.1" fill="#fff" stroke="#939393" stroke-width="1.9"/><circle cx="553.8" cy="400.3" r="4.1" fill="#fff" stroke="#939393" stroke-width="1.9"/><circle cx="553.8" cy="416.7" r="4.1" fill="#fff" stroke="#939393" stroke-width="1.9"/><circle cx="553.8" cy="433.1" r="4.1" fill="#fff" stroke="#939393" stroke-width="1.9"/><circle cx="576.1" cy="400.3" r="4.1" fill="#fff" stroke="#939393" stroke-width="1.9"/><circle cx="576.1" cy="433.1" r="4.1" fill="#fff" stroke="#939393" stroke-width="1.9"/><circle cx="598.5" cy="400.3" r="4.1" fill="#fff" stroke="#939393" stroke-width="1.9"/><circle cx="598.5" cy="416.7" r="4.1" fill="#fff" stroke="#939393" stroke-width="1.9"/><circle cx="598.5" cy="433.1" r="4.1" fill="#fff" stroke="#939393" stroke-width="1.9"/><circle cx="297.5" cy="224.5" r="4.1" fill="#fff" stroke="#939393" stroke-width="1.9"/><circle cx="297.5" cy="337.5" r="4.1" fill="#fff" stroke="#939393" stroke-width="1.9"/><circle cx="297.5" cy="451.0" r="4.1" fill="#fff" stroke="#939393" stroke-width="1.9"/><circle cx="470.8" cy="224.5" r="4.1" fill="#fff" stroke="#939393" stroke-width="1.9"/><circle cx="470.8" cy="451.0" r="4.1" fill="#fff" stroke="#939393" stroke-width="1.9"/><circle cx="644.5" cy="224.5" r="4.1" fill="#fff" stroke="#939393" stroke-width="1.9"/><circle cx="644.5" cy="337.5" r="4.1" fill="#fff" stroke="#939393" stroke-width="1.9"/><circle cx="644.5" cy="451.0" r="4.1" fill="#fff" stroke="#939393" stroke-width="1.9"/><line x1="470.60" y1="198.00" x2="470.60" y2="220.00" stroke="#9C9C9C" stroke-width="0.9" /><g transform="translate(471.0 189.8) rotate(-90)"><path d="M-6.17,3.71 A7.2,7.2 0 1 1 1.62,7.0" fill="none" stroke="#9C9C9C" stroke-width="5.6"/><path d="M-4.6,7.8 L1.6,1.8 L2.0,13.6 Z" fill="#fff" stroke="#9C9C9C" stroke-width="2.8" stroke-linejoin="miter"/><path d="M-6.17,3.71 A7.2,7.2 0 1 1 1.62,7.0" fill="none" stroke="#fff" stroke-width="2.5"/><path d="M-4.6,7.8 L1.6,1.8 L2.0,13.6 Z" fill="#fff"/></g><g transform="translate(671.5 348.3) rotate(0)"><path d="M-6.17,3.71 A7.2,7.2 0 1 1 1.62,7.0" fill="none" stroke="#9C9C9C" stroke-width="5.6"/><path d="M-4.6,7.8 L1.6,1.8 L2.0,13.6 Z" fill="#fff" stroke="#9C9C9C" stroke-width="2.8" stroke-linejoin="miter"/><path d="M-6.17,3.71 A7.2,7.2 0 1 1 1.62,7.0" fill="none" stroke="#fff" stroke-width="2.5"/><path d="M-4.6,7.8 L1.6,1.8 L2.0,13.6 Z" fill="#fff"/></g><g transform="translate(660.8 375.8) rotate(0)"><path d="M-6.17,3.71 A7.2,7.2 0 1 1 1.62,7.0" fill="none" stroke="#9C9C9C" stroke-width="5.6"/><path d="M-4.6,7.8 L1.6,1.8 L2.0,13.6 Z" fill="#fff" stroke="#9C9C9C" stroke-width="2.8" stroke-linejoin="miter"/><path d="M-6.17,3.71 A7.2,7.2 0 1 1 1.62,7.0" fill="none" stroke="#fff" stroke-width="2.5"/><path d="M-4.6,7.8 L1.6,1.8 L2.0,13.6 Z" fill="#fff"/></g><g transform="translate(650.8 397.8) rotate(0)"><path d="M-6.17,3.71 A7.2,7.2 0 1 1 1.62,7.0" fill="none" stroke="#9C9C9C" stroke-width="5.6"/><path d="M-4.6,7.8 L1.6,1.8 L2.0,13.6 Z" fill="#fff" stroke="#9C9C9C" stroke-width="2.8" stroke-linejoin="miter"/><path d="M-6.17,3.71 A7.2,7.2 0 1 1 1.62,7.0" fill="none" stroke="#fff" stroke-width="2.5"/><path d="M-4.6,7.8 L1.6,1.8 L2.0,13.6 Z" fill="#fff"/></g><g transform="translate(632.1 417.3) rotate(0)"><path d="M-6.17,3.71 A7.2,7.2 0 1 1 1.62,7.0" fill="none" stroke="#9C9C9C" stroke-width="5.6"/><path d="M-4.6,7.8 L1.6,1.8 L2.0,13.6 Z" fill="#fff" stroke="#9C9C9C" stroke-width="2.8" stroke-linejoin="miter"/><path d="M-6.17,3.71 A7.2,7.2 0 1 1 1.62,7.0" fill="none" stroke="#fff" stroke-width="2.5"/><path d="M-4.6,7.8 L1.6,1.8 L2.0,13.6 Z" fill="#fff"/></g></g>
<rect x="0.00" y="0.00" width="1027.00" height="60.00" fill="#B7472A" /><rect x="707.00" y="1.00" width="86.00" height="59.00" fill="#91371F" /><text x="713.4" y="24.0" font-size="12" fill="#F3CFC5" textLength="73.2" lengthAdjust="spacingAndGlyphs" >Drawing Tools</text><text x="343.5" y="24.0" font-size="12" fill="#fff" textLength="182.0" lengthAdjust="spacingAndGlyphs" >9123-flat-hands.pptx - PowerPoint</text><rect x="23.00" y="9.20" width="14.00" height="13.60" fill="#fff" rx="0.6" /><rect x="25.00" y="10.80" width="10.00" height="4.30" fill="#B7472A" /><rect x="25.00" y="17.70" width="2.00" height="3.40" fill="#B7472A" /><rect x="33.00" y="17.70" width="2.00" height="3.40" fill="#B7472A" /><rect x="28.50" y="19.50" width="3.00" height="3.30" fill="#B7472A" /><path d="M53.2,14 h8 a3.7,3.7 0 0 1 0,7.4 h-2.6" fill="none" stroke="#D8907C" stroke-width="1.8" /><path d="M57.4,9.7 l-4.5,4.3 4.5,4.3" fill="none" stroke="#D8907C" stroke-width="1.8" /><path d="M72.5,14.4 h4.5 l-2.2,2.6 z" fill="#D8907C"/><path d="M99.4,9.7 v5 h-5" fill="none" stroke="#D8907C" stroke-width="1.7" /><path d="M98.9,14.2 A5.5,5.5 0 1 1 90.2,11.8" fill="none" stroke="#D8907C" stroke-width="1.8" /><path d="M115,9.7 h16.2" fill="none" stroke="#fff" stroke-width="1.3" /><path d="M117.3,10 v8.4 h5 M123,18.6 v3.6 M118.2,22.8 h9.4" fill="none" stroke="#fff" stroke-width="1.2" /><circle cx="126.7" cy="16.4" r="4.3" fill="#B7472A" stroke="#fff" stroke-width="1.2"/><path d="M125.3,14.1 l3.8,2.3 -3.8,2.3 z" fill="#fff" /><line x1="148.60" y1="15.50" x2="153.80" y2="15.50" stroke="#fff" stroke-width="1.2" /><path d="M148.5,17.4 h5.4 l-2.7,3.4 z" fill="#fff"/><path d="M858.5,11.5 h12.5 v9 h-12.5 z M858.5,13.8 h12.5" fill="none" stroke="#fff" stroke-width="1.1" /><path d="M864.7,19.5 v-4 M862.6,17.2 l2.1,-2.1 2.1,2.1" fill="none" stroke="#fff" stroke-width="1.1" /><line x1="906.50" y1="16.50" x2="916.50" y2="16.50" stroke="#fff" stroke-width="1.1" /><rect x="952.50" y="11.50" width="9.50" height="9.50" fill="none" stroke="#fff" stroke-width="1.1" /><path d="M998,11 l10,10 M1008,11 l-10,10" fill="none" stroke="#fff" stroke-width="1.15" />
<rect x="64.00" y="36.00" width="59.30" height="25.00" fill="#F1F1F1" /><text x="21.5" y="52.2" font-size="12.5" fill="#fff" textLength="17.7" lengthAdjust="spacingAndGlyphs" >File</text><text x="77.5" y="52.2" font-size="12.5" fill="#D04525" textLength="32.5" lengthAdjust="spacingAndGlyphs" >Home</text><text x="138.0" y="52.2" font-size="12.5" fill="#fff" textLength="29.0" lengthAdjust="spacingAndGlyphs" >Insert</text><text x="195.4" y="52.2" font-size="12.5" fill="#fff" textLength="35.0" lengthAdjust="spacingAndGlyphs" >Design</text><text x="259.6" y="52.2" font-size="12.5" fill="#fff" textLength="57.4" lengthAdjust="spacingAndGlyphs" >Transitions</text><text x="344.2" y="52.2" font-size="12.5" fill="#fff" textLength="60.8" lengthAdjust="spacingAndGlyphs" >Animations</text><text x="431.8" y="52.2" font-size="12.5" fill="#fff" textLength="56.9" lengthAdjust="spacingAndGlyphs" >Slide Show</text><text x="516.5" y="52.2" font-size="12.5" fill="#fff" textLength="36.5" lengthAdjust="spacingAndGlyphs" >Review</text><text x="580.3" y="52.2" font-size="12.5" fill="#fff" textLength="24.5" lengthAdjust="spacingAndGlyphs" >View</text><text x="632.4" y="52.2" font-size="12.5" fill="#fff" textLength="59.6" lengthAdjust="spacingAndGlyphs" >Power-user</text><text x="730.3" y="52.2" font-size="12.5" fill="#fff" textLength="37.9" lengthAdjust="spacingAndGlyphs" >Format</text><text x="822.0" y="52.2" font-size="12.5" fill="#F6DDD6" textLength="46.8" lengthAdjust="spacingAndGlyphs" >Tell me...</text><text x="881.5" y="52.2" font-size="12.5" fill="#fff" textLength="54.8" lengthAdjust="spacingAndGlyphs" >Farshad I...</text><path d="M806.3,50 a4.3,4.3 0 1 1 6.4,0 c-0.8,0.9 -1,1.6 -1,2.6 h-4.4 c0,-1 -0.2,-1.7 -1,-2.6 z M807.6,54.3 h3.8" fill="none" stroke="#fff" stroke-width="1.05" /><rect x="947.00" y="36.00" width="63.00" height="23.00" fill="#983A22" /><circle cx="961" cy="46" r="4.1" fill="none" stroke="#fff" stroke-width="1.4"/><path d="M954.3,55.5 c0.4,-4 2.6,-6 5.4,-6" fill="none" stroke="#fff" stroke-width="1.4" /><path d="M962.5,52.5 h6 M965.5,49.5 v6" fill="none" stroke="#fff" stroke-width="1.3" /><text x="973.2" y="52.2" font-size="12.5" fill="#fff" textLength="28.8" lengthAdjust="spacingAndGlyphs" >Share</text>
<rect x="1.00" y="60.00" width="1025.00" height="92.00" fill="#F1F1F1" /><line x1="1.00" y1="152.50" x2="1026.00" y2="152.50" stroke="#D2D2D2" stroke-width="1" /><line x1="86.50" y1="64.00" x2="86.50" y2="147.00" stroke="#DADADA" stroke-width="1" /><line x1="213.50" y1="64.00" x2="213.50" y2="147.00" stroke="#DADADA" stroke-width="1" /><line x1="441.50" y1="64.00" x2="441.50" y2="147.00" stroke="#DADADA" stroke-width="1" /><line x1="634.50" y1="64.00" x2="634.50" y2="147.00" stroke="#DADADA" stroke-width="1" /><line x1="884.50" y1="64.00" x2="884.50" y2="147.00" stroke="#DADADA" stroke-width="1" /><line x1="976.50" y1="64.00" x2="976.50" y2="147.00" stroke="#DADADA" stroke-width="1" /><text x="10.3" y="147.2" font-size="12" fill="#666666" textLength="50.7" lengthAdjust="spacingAndGlyphs" >Clipboard</text><text x="135.4" y="147.2" font-size="12" fill="#666666" textLength="29.6" lengthAdjust="spacingAndGlyphs" >Slides</text><text x="307.7" y="147.2" font-size="12" fill="#666666" textLength="23.1" lengthAdjust="spacingAndGlyphs" >Font</text><text x="503.6" y="147.2" font-size="12" fill="#666666" textLength="52.1" lengthAdjust="spacingAndGlyphs" >Paragraph</text><text x="729.5" y="147.2" font-size="12" fill="#666666" textLength="43.0" lengthAdjust="spacingAndGlyphs" >Drawing</text><text x="912.5" y="147.2" font-size="12" fill="#666666" textLength="36.2" lengthAdjust="spacingAndGlyphs" >Editing</text><path d="M79.5,141.5 h-4.5 v4.5 M77.5,143.5 l3.6,3.6 M81.4,147.4 v-3 M81.4,147.4 h-3" fill="none" stroke="#777" stroke-width="1" /><path d="M434.2,141.5 h-4.5 v4.5 M432.2,143.5 l3.6,3.6 M436.1,147.4 v-3 M436.1,147.4 h-3" fill="none" stroke="#777" stroke-width="1" /><path d="M628.0,141.5 h-4.5 v4.5 M626.0,143.5 l3.6,3.6 M629.9,147.4 v-3 M629.9,147.4 h-3" fill="none" stroke="#777" stroke-width="1" /><path d="M877.5,141.5 h-4.5 v4.5 M875.5,143.5 l3.6,3.6 M879.4,147.4 v-3 M879.4,147.4 h-3" fill="none" stroke="#777" stroke-width="1" /><path d="M1007.5,146.5 l4.2,-4.2 4.2,4.2" fill="none" stroke="#555" stroke-width="1.6" /><rect x="14.10" y="71.10" width="24.00" height="24.60" fill="#EDC373" rx="1.5" /><rect x="19.00" y="71.00" width="14.00" height="4.00" fill="#737373" rx="0.8" /><rect x="23.20" y="68.20" width="5.70" height="4.00" fill="#737373" rx="0.8" /><rect x="25.20" y="70.00" width="1.80" height="1.80" fill="#E8E8E8" /><path d="M28.5,79.5 h9.3 l3.7,3.7 v14.3 h-13 z" fill="#fff" stroke="#6E6E6E" stroke-width="1" /><path d="M37.8,79.5 v3.7 h3.7" fill="none" stroke="#9A9A9A" stroke-width="0.9" /><text x="12.2" y="112.5" font-size="12.5" fill="#444444" textLength="27.8" lengthAdjust="spacingAndGlyphs" >Paste</text><path d="M22.8,122.8 h5.0 l-2.5,3.0 z" fill="#666"/><path d="M53.8,66.3 l1.2,-0.2 6.2,9.8 -1.6,0.5 z M62,66.3 l-1.2,-0.2 -6.2,9.8 1.6,0.5 z" fill="#666" stroke="#666" stroke-width="0.6" /><circle cx="53.8" cy="78.3" r="2.2" fill="none" stroke="#3A7BC8" stroke-width="1.1"/><circle cx="61.9" cy="78.3" r="2.2" fill="none" stroke="#3A7BC8" stroke-width="1.1"/><path d="M50.5,90.3 h4.3 l2,2 v8.4 h-6.3 z" fill="#fff" stroke="#666" stroke-width="1" /><path d="M52.3,94 h3 M52.3,96 h3 M52.3,98 h3" fill="none" stroke="#2B6CB8" stroke-width="0.8" /><path d="M56.5,94 h5.3 l2.8,2.8 v6.6 h-8.1 z" fill="#fff" stroke="#666" stroke-width="1" /><path d="M58.3,98.3 h4.6 M58.3,100.3 h4.6" fill="none" stroke="#2B6CB8" stroke-width="0.8" /><path d="M71.8,96.2 h5.0 l-2.5,3.0 z" fill="#666"/><path d="M63,112.8 l2.8,2.4 -2.4,2.8 -2.8,-2.4 z" fill="#ADADAD" /><path d="M59.8,115.5 l4,3.4 -2.2,2.5 -4,-3.4 z" fill="#BDBDBD" /><path d="M56.8,118.8 l4,3.4 -4,4.4 -3,-1.2 -3.2,-1.6 z" fill="#D0CDD0" /><line x1="86.50" y1="64.00" x2="86.50" y2="147.00" stroke="#DADADA" stroke-width="1" /><rect x="98.50" y="70.50" width="27.00" height="22.00" fill="#fff" stroke="#7A7A7A" stroke-width="1.2" rx="1.5" /><rect x="104.00" y="74.00" width="19.00" height="5.50" fill="#CFCFCF" /><path d="M102,83.5 h2 M106,83.5 h17 M102,87.5 h2 M106,87.5 h17" fill="none" stroke="#9A9A9A" stroke-width="1" /><g stroke="#E8B54A" stroke-width="1.5"><line x1="95.60" y1="72.00" x2="107.80" y2="72.00" stroke="#EBC070" stroke-width="1.8" /><line x1="101.70" y1="65.80" x2="101.70" y2="78.20" stroke="#EBC070" stroke-width="1.8" /><line x1="97.40" y1="67.70" x2="106.00" y2="76.30" stroke="#EBC070" stroke-width="1.8" /><line x1="106.00" y1="67.70" x2="97.40" y2="76.30" stroke="#EBC070" stroke-width="1.8" /></g><circle cx="101.7" cy="72" r="2.3" fill="#F1F1F1"/><text x="100.7" y="112.5" font-size="12.5" fill="#444444" textLength="23.1" lengthAdjust="spacingAndGlyphs" >New</text><text x="95.0" y="128.5" font-size="12.5" fill="#444444" textLength="24.0" lengthAdjust="spacingAndGlyphs" >Slide</text><path d="M122.8,122.7 h5.0 l-2.5,3.0 z" fill="#666"/><rect x="136.70" y="68.00" width="14.60" height="12.60" fill="#fff" stroke="#666" stroke-width="1.1" /><rect x="138.50" y="69.20" width="11.00" height="1.80" fill="#C4C4C4" /><rect x="138.50" y="72.40" width="4.60" height="6.30" fill="#C0C0C0" /><path d="M144.6,73.7 h4.8 M144.6,76 h4.8 M144.6,78.3 h4.8" fill="none" stroke="#9A9A9A" stroke-width="0.9" /><text x="155.7" y="79.0" font-size="12.5" fill="#444444" textLength="35.0" lengthAdjust="spacingAndGlyphs" >Layout</text><path d="M193.5,73.5 h5.0 l-2.5,3.0 z" fill="#666"/><rect x="137.60" y="93.20" width="13.80" height="10.00" fill="#fff" stroke="#666" stroke-width="1.1" /><rect x="139.60" y="95.00" width="9.80" height="1.60" fill="#C4C4C4" /><path d="M144.6,99 h4.8 M144.6,101.2 h4.8" fill="none" stroke="#9A9A9A" stroke-width="0.8" /><rect x="139.60" y="97.80" width="4.00" height="3.80" fill="#C0C0C0" /><path d="M137.6,96 c0.3,-3.6 3.6,-5.4 6.6,-5 c1.2,0.2 2,0.7 2.6,1.4" fill="none" stroke="#F1F1F1" stroke-width="3.2" /><path d="M137.6,96 c0.3,-3.6 3.6,-5.4 6.6,-5 c1.2,0.2 2,0.7 2.6,1.4" fill="none" stroke="#2B6CB8" stroke-width="1.5" /><path d="M135.8,92 l0.6,5 4.6,-1.4 z" fill="#2B6CB8" /><text x="155.7" y="101.8" font-size="12.5" fill="#444444" textLength="27.0" lengthAdjust="spacingAndGlyphs" >Reset</text><path d="M142.4,115.6 h9 v3.4 h-9" fill="none" stroke="#E3772F" stroke-width="1.3" /><rect x="142.60" y="121.40" width="8.80" height="5.80" fill="#fff" stroke="#666" stroke-width="1.1" /><rect x="144.20" y="122.80" width="5.60" height="1.40" fill="#C4C4C4" /><g><line x1="136.00" y1="115.50" x2="142.40" y2="115.50" stroke="#EBC070" stroke-width="1" /><line x1="139.20" y1="112.20" x2="139.20" y2="118.80" stroke="#EBC070" stroke-width="1" /><line x1="137.00" y1="113.20" x2="141.40" y2="117.80" stroke="#EBC070" stroke-width="1" /><line x1="141.40" y1="113.20" x2="137.00" y2="117.80" stroke="#EBC070" stroke-width="1" /><circle cx="139.2" cy="115.5" r="1.1" fill="#F1F1F1"/></g><text x="155.7" y="124.7" font-size="12.5" fill="#444444" textLength="38.2" lengthAdjust="spacingAndGlyphs" >Section</text><path d="M196.7,119.3 h5.0 l-2.5,3.0 z" fill="#666"/><rect x="218.50" y="71.50" width="97.50" height="22.00" fill="#fff" stroke="#ABABAB" stroke-width="1" /><rect x="316.00" y="71.50" width="45.50" height="22.00" fill="#fff" stroke="#ABABAB" stroke-width="1" /><text x="221.7" y="87.0" font-size="12.5" fill="#444444" textLength="70.6" lengthAdjust="spacingAndGlyphs" >Calibri (Body)</text><path d="M306.1,81.5 h5.0 l-2.5,3.0 z" fill="#666"/><text x="319.8" y="87.0" font-size="12.5" fill="#444444" textLength="11.2" lengthAdjust="spacingAndGlyphs" >18</text><path d="M351.9,81.5 h5.0 l-2.5,3.0 z" fill="#666"/><text x="368.8" y="88.0" font-size="15" fill="#555" textLength="10.0" lengthAdjust="spacingAndGlyphs" >A</text><path d="M376,78 l2.6,-3 2.6,3 z" fill="#3E7EC6" /><text x="391.0" y="88.0" font-size="12.5" fill="#555" textLength="8.0" lengthAdjust="spacingAndGlyphs" >A</text><path d="M398,75 h5.2 l-2.6,3 z" fill="#3E7EC6" /><line x1="410.50" y1="71.00" x2="410.50" y2="93.00" stroke="#DADADA" stroke-width="1" /><text x="420.2" y="82.8" font-size="10.5" fill="#666" textLength="5.9" lengthAdjust="spacingAndGlyphs" >A</text><path d="M428.5,77.4 L433.9,81.2 L426.4,89.2 L421.2,85.4 Z" fill="#E88A9A" /><path d="M422.6,83.9 L427.8,87.7" fill="none" stroke="#F6D5DA" stroke-width="0.9" /><text x="224.5" y="117.0" font-size="13" fill="#444444" textLength="7.8" lengthAdjust="spacingAndGlyphs" font-weight="bold" >B</text><text x="248.8" y="117.0" font-size="13" fill="#444444" font-weight="bold" font-style="italic" >I</text><text x="268.4" y="116.5" font-size="12.5" fill="#444444" textLength="8.2" lengthAdjust="spacingAndGlyphs" stroke="#444" stroke-width="0.35">U</text><line x1="268.20" y1="118.70" x2="276.80" y2="118.70" stroke="#444444" stroke-width="1" /><text x="292.5" y="118.2" font-size="13" fill="#BBBBBB" textLength="8.0" lengthAdjust="spacingAndGlyphs" font-weight="bold" >S</text><text x="291.3" y="117.0" font-size="13" fill="#444444" textLength="8.0" lengthAdjust="spacingAndGlyphs" font-weight="bold" >S</text><text x="309.3" y="116.5" font-size="10.5" fill="#555" textLength="15.7" lengthAdjust="spacingAndGlyphs" >abc</text><line x1="308.80" y1="113.30" x2="325.50" y2="113.30" stroke="#555" stroke-width="0.9" /><text x="331.5" y="114.0" font-size="10.5" fill="#444444" textLength="15.2" lengthAdjust="spacingAndGlyphs" >AV</text><path d="M332,118.5 h14.5 M334.5,116.3 l-2.5,2.2 2.5,2.2 M344,116.3 l2.5,2.2 -2.5,2.2" fill="none" stroke="#2B6CB8" stroke-width="1.1" /><path d="M351.2,112.0 h5.0 l-2.5,3.0 z" fill="#666"/><text x="364.2" y="117.0" font-size="12.5" fill="#444444" textLength="14.5" lengthAdjust="spacingAndGlyphs" >Aa</text><path d="M383.9,112.0 h5.0 l-2.5,3.0 z" fill="#666"/><line x1="398.50" y1="102.50" x2="398.50" y2="123.50" stroke="#DADADA" stroke-width="1" /><text x="409.8" y="117.0" font-size="13.5" fill="#444444" textLength="9.4" lengthAdjust="spacingAndGlyphs" >A</text><rect x="405.80" y="117.30" width="16.40" height="3.60" fill="#FF0000" /><path d="M427.6,112.0 h5.0 l-2.5,3.0 z" fill="#666"/><circle cx="451.3" cy="75.5" r="1.3" fill="#2B6CB8"/><line x1="455.00" y1="75.50" x2="463.40" y2="75.50" stroke="#555" stroke-width="1.1" /><circle cx="451.3" cy="81.5" r="1.3" fill="#2B6CB8"/><line x1="455.00" y1="81.50" x2="463.40" y2="81.50" stroke="#555" stroke-width="1.1" /><circle cx="451.3" cy="87.5" r="1.3" fill="#2B6CB8"/><line x1="455.00" y1="87.50" x2="463.40" y2="87.50" stroke="#555" stroke-width="1.1" /><path d="M470.9,81.0 h5.0 l-2.5,3.0 z" fill="#666"/><text x="483.2" y="77.7" font-size="6.5" fill="#2B6CB8" font-weight="bold" >1</text><line x1="489.00" y1="75.50" x2="497.30" y2="75.50" stroke="#555" stroke-width="1.1" /><text x="483.2" y="83.7" font-size="6.5" fill="#2B6CB8" font-weight="bold" >2</text><line x1="489.00" y1="81.50" x2="497.30" y2="81.50" stroke="#555" stroke-width="1.1" /><text x="483.2" y="89.7" font-size="6.5" fill="#2B6CB8" font-weight="bold" >3</text><line x1="489.00" y1="87.50" x2="497.30" y2="87.50" stroke="#555" stroke-width="1.1" /><path d="M504.8,81.0 h5.0 l-2.5,3.0 z" fill="#666"/><line x1="520.00" y1="75.50" x2="535.50" y2="75.50" stroke="#B8B8B8" stroke-width="1" /><line x1="527.00" y1="78.50" x2="535.50" y2="78.50" stroke="#B8B8B8" stroke-width="1" /><line x1="527.00" y1="81.50" x2="535.50" y2="81.50" stroke="#B8B8B8" stroke-width="1" /><line x1="527.00" y1="84.50" x2="535.50" y2="84.50" stroke="#B8B8B8" stroke-width="1" /><line x1="520.00" y1="87.50" x2="535.50" y2="87.50" stroke="#B8B8B8" stroke-width="1" /><line x1="542.50" y1="75.50" x2="558.00" y2="75.50" stroke="#B8B8B8" stroke-width="1" /><line x1="549.50" y1="78.50" x2="558.00" y2="78.50" stroke="#B8B8B8" stroke-width="1" /><line x1="549.50" y1="81.50" x2="558.00" y2="81.50" stroke="#B8B8B8" stroke-width="1" /><line x1="549.50" y1="84.50" x2="558.00" y2="84.50" stroke="#B8B8B8" stroke-width="1" /><line x1="542.50" y1="87.50" x2="558.00" y2="87.50" stroke="#B8B8B8" stroke-width="1" /><path d="M526,81.5 h-5.5 M522.8,79.3 l-2.3,2.2 2.3,2.2" fill="none" stroke="#B8B8B8" stroke-width="1.1" /><path d="M542.5,81.5 h5.5 M545.7,79.3 l2.3,2.2 -2.3,2.2" fill="none" stroke="#B8B8B8" stroke-width="1.1" /><path d="M570.5,74 v15 M568,76.5 l2.5,-2.7 2.5,2.7 M568,86.5 l2.5,2.7 2.5,-2.7" fill="none" stroke="#2B6CB8" stroke-width="1.2" /><line x1="574.50" y1="76.50" x2="582.00" y2="76.50" stroke="#555" stroke-width="1.1" /><line x1="574.50" y1="80.50" x2="582.00" y2="80.50" stroke="#555" stroke-width="1.1" /><line x1="574.50" y1="84.50" x2="582.00" y2="84.50" stroke="#555" stroke-width="1.1" /><line x1="574.50" y1="88.50" x2="582.00" y2="88.50" stroke="#555" stroke-width="1.1" /><path d="M587.1,81.0 h5.0 l-2.5,3.0 z" fill="#666"/><path d="M601.2,67.2 v13 M605.4,67.2 v13 M609.5,75 v5.2 M613.4,75 v5.2" fill="none" stroke="#555" stroke-width="1" /><path d="M599.7,79.2 h3 l-1.5,2.4 z" fill="#555" /><path d="M603.9,79.2 h3 l-1.5,2.4 z" fill="#555" /><path d="M608.0,79.2 h3 l-1.5,2.4 z" fill="#555" /><path d="M611.9,79.2 h3 l-1.5,2.4 z" fill="#555" /><text x="608.3" y="73.7" font-size="10.5" fill="#3E7EC6" textLength="6.8" lengthAdjust="spacingAndGlyphs" font-weight="bold" >A</text><path d="M620.3,72.8 h5.0 l-2.5,3.0 z" fill="#666"/><path d="M603,90.2 h-2.5 v13.3 h2.5 M613,90.2 h2.5 v13.3 h-2.5" fill="none" stroke="#555" stroke-width="1.1" /><path d="M603.5,95.4 h9 M602.5,97.8 h11 M603.5,100.2 h9" fill="none" stroke="#A5A5A5" stroke-width="0.9" /><path d="M608,94 v-4 M606.2,91.6 l1.8,-2 1.8,2 M608,101.2 v3.6 M606.2,103 l1.8,2 1.8,-2" fill="none" stroke="#3E7EC6" stroke-width="1.1" /><path d="M620.3,95.7 h5.0 l-2.5,3.0 z" fill="#666"/><path d="M600,121.5 l3.5,-4.5 -3.5,-4.5 h11 l4,4.5 -2,4.5 z" fill="#BDBDBD" /><rect x="605.70" y="118.80" width="10.00" height="8.80" fill="#F6F0F4" stroke="#B5B5B5" stroke-width="1" /><path d="M608,122 h1 M610,122 h3.5 M608,124.6 h1 M610,124.6 h3.5" fill="none" stroke="#DDB8C8" stroke-width="0.9" /><path d="M620.3,119.0 h5.0 l-2.5,3.0 z" fill="#BDBDBD"/><rect x="468.00" y="102.00" width="22.00" height="22.70" fill="#C8C8C8" /><line x1="450.50" y1="108.40" x2="464.00" y2="108.40" stroke="#555" stroke-width="1" /><line x1="450.50" y1="111.55" x2="460.00" y2="111.55" stroke="#555" stroke-width="1" /><line x1="450.50" y1="114.70" x2="464.00" y2="114.70" stroke="#555" stroke-width="1" /><line x1="450.50" y1="117.85" x2="460.00" y2="117.85" stroke="#555" stroke-width="1" /><line x1="472.30" y1="108.40" x2="485.80" y2="108.40" stroke="#555" stroke-width="1" /><line x1="474.30" y1="111.55" x2="483.80" y2="111.55" stroke="#555" stroke-width="1" /><line x1="472.30" y1="114.70" x2="485.80" y2="114.70" stroke="#555" stroke-width="1" /><line x1="474.30" y1="117.85" x2="483.80" y2="117.85" stroke="#555" stroke-width="1" /><line x1="494.50" y1="108.40" x2="508.00" y2="108.40" stroke="#555" stroke-width="1" /><line x1="498.50" y1="111.55" x2="508.00" y2="111.55" stroke="#555" stroke-width="1" /><line x1="494.50" y1="114.70" x2="508.00" y2="114.70" stroke="#555" stroke-width="1" /><line x1="498.50" y1="117.85" x2="508.00" y2="117.85" stroke="#555" stroke-width="1" /><line x1="516.30" y1="108.40" x2="529.80" y2="108.40" stroke="#555" stroke-width="1" /><line x1="516.30" y1="111.55" x2="529.80" y2="111.55" stroke="#555" stroke-width="1" /><line x1="516.30" y1="114.70" x2="529.80" y2="114.70" stroke="#555" stroke-width="1" /><line x1="516.30" y1="117.85" x2="529.80" y2="117.85" stroke="#555" stroke-width="1" /><line x1="538.50" y1="102.50" x2="538.50" y2="123.50" stroke="#DADADA" stroke-width="1" /><line x1="547.00" y1="109.00" x2="552.70" y2="109.00" stroke="#2B6CB8" stroke-width="1.2" /><line x1="554.70" y1="109.00" x2="560.40" y2="109.00" stroke="#2B6CB8" stroke-width="1.2" /><line x1="547.00" y1="112.00" x2="552.70" y2="112.00" stroke="#2B6CB8" stroke-width="1.2" /><line x1="554.70" y1="112.00" x2="560.40" y2="112.00" stroke="#2B6CB8" stroke-width="1.2" /><line x1="547.00" y1="115.00" x2="552.70" y2="115.00" stroke="#2B6CB8" stroke-width="1.2" /><line x1="554.70" y1="115.00" x2="560.40" y2="115.00" stroke="#2B6CB8" stroke-width="1.2" /><line x1="547.00" y1="118.00" x2="552.70" y2="118.00" stroke="#2B6CB8" stroke-width="1.2" /><line x1="554.70" y1="118.00" x2="560.40" y2="118.00" stroke="#2B6CB8" stroke-width="1.2" /><path d="M565.5,112.0 h5.0 l-2.5,3.0 z" fill="#666"/><circle cx="666.3" cy="76" r="7.5" fill="#fff" stroke="#3C7CC5" stroke-width="1.1"/><rect x="645.20" y="71.40" width="16.40" height="16.00" fill="#F7F7F7" stroke="#3C7CC5" stroke-width="1.1" /><path d="M659.3,78.8 l8.8,8.6 -8.8,8.6 -8.8,-8.6 z" fill="#fff" stroke="#3C7CC5" stroke-width="1.1" /><text x="641.4" y="112.7" font-size="12.5" fill="#444444" textLength="36.2" lengthAdjust="spacingAndGlyphs" >Shapes</text><path d="M657.4,123.3 h5.0 l-2.5,3.0 z" fill="#666"/><rect x="702.80" y="72.00" width="10.20" height="10.00" fill="#EDC373" /><rect x="694.00" y="81.30" width="10.50" height="9.70" fill="#EDC373" /><rect x="690.80" y="68.90" width="10.80" height="10.20" fill="#fff" stroke="#7A7A7A" stroke-width="1" /><rect x="705.50" y="83.80" width="10.80" height="10.20" fill="#fff" stroke="#7A7A7A" stroke-width="1" /><text x="683.7" y="112.7" font-size="12.5" fill="#444444" textLength="41.3" lengthAdjust="spacingAndGlyphs" >Arrange</text><path d="M701.5,123.3 h5.0 l-2.5,3.0 z" fill="#666"/><rect x="736.60" y="69.40" width="25.20" height="25.80" fill="#fff" stroke="#8A8A8A" stroke-width="1.1" rx="6" /><path d="M764.6,75.5 l0.6,4.6 -7.2,8.8 -3.6,-2.8 z" fill="#787878" /><path d="M754.8,86.5 l3.2,2.6 c-0.5,3.2 -2.4,5.4 -6,6.2 c-2.4,0.5 -5.6,1 -9.4,2 c3.4,-2.2 5,-4.6 6.6,-7.2 c1.4,-2.2 3.2,-3.4 5.6,-3.6 z" fill="#4A86CC" stroke="#F1F1F1" stroke-width="0.8" /><path d="M752.5,89.6 c1.2,-1 2.6,-1 3.4,0" fill="none" stroke="#fff" stroke-width="0.9" /><text x="735.0" y="112.7" font-size="12.5" fill="#444444" textLength="29.7" lengthAdjust="spacingAndGlyphs" >Quick</text><text x="730.5" y="128.9" font-size="12.5" fill="#444444" textLength="29.4" lengthAdjust="spacingAndGlyphs" >Styles</text><path d="M763.5,123.3 h5.0 l-2.5,3.0 z" fill="#666"/><path d="M776.6,72.2 l5.8,-5 5.4,5.6 -5.6,5 z" fill="#fff" stroke="#555" stroke-width="1" /><path d="M779.6,69.6 v-2.8 c0.6,-1 2.4,-1 3,0 v1.6" fill="none" stroke="#555" stroke-width="0.9" /><path d="M788.2,70.8 c1.6,1.6 2,4 0.8,6.4 c-0.4,-1.8 -1.4,-3.2 -2.6,-4.2 z" fill="#3E7EC6" /><rect x="774.00" y="78.40" width="15.80" height="3.30" fill="#C8474A" /><text x="793.3" y="79.0" font-size="12.5" fill="#444444" textLength="49.4" lengthAdjust="spacingAndGlyphs" >Shape Fill</text><path d="M845.7,73.5 h5.0 l-2.5,3.0 z" fill="#666"/><path d="M784.6,89.7 h-9.8 v9.8 h3.4" fill="none" stroke="#555" stroke-width="1" /><path d="M787,90.2 l2,2 -7.4,6.8 -3,1 0.8,-3 z" fill="#3E7EC6" /><rect x="774.00" y="101.10" width="15.80" height="3.50" fill="#4A7EC5" /><text x="793.3" y="101.8" font-size="12.5" fill="#444444" textLength="73.9" lengthAdjust="spacingAndGlyphs" >Shape Outline</text><path d="M870.0,96.3 h5.0 l-2.5,3.0 z" fill="#666"/><path d="M776.2,124.4 c-0.8,-0.2 -1,-0.8 -0.6,-1.6 l3,-6.2 c0.4,-0.8 1,-1.2 1.8,-1.2 h7 c0.8,0 1.2,0.6 0.9,1.4 l-2.2,6.6 c-0.3,0.8 -0.9,1.6 -1.8,1.6 z" fill="#7A7A7A" transform="translate(0.9 1.1)"/><path d="M776.2,122.6 l2.8,-5.8 c0.4,-0.8 1,-1.2 1.8,-1.2 h6.2 c0.7,0 1,0.5 0.8,1.2 l-1.8,5 c-0.3,0.8 -0.9,1.3 -1.8,1.3 h-7.4 c-0.6,0 -0.8,-0.1 -0.6,-0.5 z" fill="#fff" stroke="#666" stroke-width="0.7" /><text x="793.3" y="124.7" font-size="12.5" fill="#444444" textLength="69.6" lengthAdjust="spacingAndGlyphs" >Shape Effects</text><path d="M866.0,119.3 h5.0 l-2.5,3.0 z" fill="#666"/><circle cx="901.7" cy="72.8" r="3.6" fill="#fff" stroke="#2B6CB8" stroke-width="1.5"/><line x1="898.80" y1="75.80" x2="893.70" y2="79.60" stroke="#2B6CB8" stroke-width="2.2" /><text x="911.6" y="78.8" font-size="12.5" fill="#444444" textLength="21.9" lengthAdjust="spacingAndGlyphs" >Find</text><text x="892.0" y="97.3" font-size="9.5" fill="#555" textLength="5.2" lengthAdjust="spacingAndGlyphs" font-weight="bold" >a</text><text x="897.2" y="97.3" font-size="9.5" fill="#8E44AD" textLength="5.6" lengthAdjust="spacingAndGlyphs" font-weight="bold" >b</text><text x="896.6" y="104.4" font-size="9.5" fill="#555" textLength="5.2" lengthAdjust="spacingAndGlyphs" font-weight="bold" >a</text><text x="901.9" y="104.4" font-size="9.5" fill="#2B6CB8" textLength="5.6" lengthAdjust="spacingAndGlyphs" font-weight="bold" >c</text><path d="M893,99.3 v2.5 h2.8 M894.5,100.3 l1.5,1.5 -1.5,1.5" fill="none" stroke="#2B6CB8" stroke-width="0.9" /><text x="911.6" y="101.8" font-size="12.5" fill="#444444" textLength="40.4" lengthAdjust="spacingAndGlyphs" >Replace</text><path d="M961.8,96.0 h5.0 l-2.5,3.0 z" fill="#666"/><path d="M896.5,112.5 v12 l3,-2.8 2.3,5 1.6,-0.8 -2.3,-4.8 h4 z" fill="#fff" stroke="#555" stroke-width="1" /><text x="911.6" y="124.7" font-size="12.5" fill="#444444" textLength="30.0" lengthAdjust="spacingAndGlyphs" >Select</text><path d="M945.0,119.2 h5.0 l-2.5,3.0 z" fill="#666"/>
<rect x="1.00" y="652.00" width="1025.00" height="20.50" fill="#F1F1F1" /><line x1="1.00" y1="651.50" x2="1026.00" y2="651.50" stroke="#ABABAB" stroke-width="1" /><text x="8.2" y="665.8" font-size="12.5" fill="#444444" textLength="56.8" lengthAdjust="spacingAndGlyphs" >Slide 4 of 6</text><path d="M85.5,656 h5.5 l1.5,1.5 v9.5 l-1.5,-1.5 h-5.5 z" fill="none" stroke="#555" stroke-width="1" /><path d="M92.5,657.5 l1.5,-1.5 h2.5 M92.5,667 l1.5,-1.5 h5 v-3" fill="none" stroke="#555" stroke-width="1" /><path d="M99.5,656.5 l1.5,1.5 -5,5 -2,0.5 0.5,-2 z" fill="#F1F1F1" stroke="#555" stroke-width="0.9" /><path d="M510.5,659.5 h10.5 M510.5,662.5 h10.5 M510.5,665.5 h10.5" fill="none" stroke="#555" stroke-width="1.1" /><path d="M513.5,657 l2.3,-2.3 2.3,2.3 z" fill="#555" /><text x="526.2" y="665.8" font-size="12.5" fill="#444444" textLength="29.2" lengthAdjust="spacingAndGlyphs" >Notes</text><path d="M577,656 h12 v8 h-6.5 l-3,3.5 v-3.5 h-2.5 z" fill="#555" /><text x="593.4" y="665.8" font-size="12.5" fill="#444444" textLength="53.6" lengthAdjust="spacingAndGlyphs" >Comments</text><rect x="666.50" y="652.00" width="37.50" height="20.50" fill="#C6C6C6" /><rect x="678.70" y="655.70" width="13.00" height="12.00" fill="none" stroke="#555" stroke-width="1.1" /><path d="M682.5,656 v11.5 M682.5,659.5 h9 M685,662.5 h4.5" fill="none" stroke="#555" stroke-width="1" /><rect x="716.00" y="656.00" width="5.50" height="4.80" fill="none" stroke="#555" stroke-width="1" /><rect x="724.00" y="656.00" width="5.50" height="4.80" fill="none" stroke="#555" stroke-width="1" /><rect x="716.00" y="663.00" width="5.50" height="4.80" fill="none" stroke="#555" stroke-width="1" /><rect x="724.00" y="663.00" width="5.50" height="4.80" fill="none" stroke="#555" stroke-width="1" /><path d="M754,656.5 h5 l1.5,1 1.5,-1 h5 v10 h-5 l-1.5,1 -1.5,-1 h-5 z M760.5,657.5 v10" fill="none" stroke="#555" stroke-width="1" /><path d="M755.5,659 h3.5 M755.5,661 h3.5 M755.5,663 h3.5 M762,659 h3.5 M762,661 h3.5 M762,663 h3.5" fill="none" stroke="#555" stroke-width="0.7" /><path d="M791.5,656.5 h13 M793,656.5 v6.5 h10 v-6.5 M798,663 v4 M795,667.5 h6" fill="none" stroke="#555" stroke-width="1.1" /><line x1="822.50" y1="661.80" x2="828.70" y2="661.80" stroke="#555" stroke-width="1.6" /><line x1="833.00" y1="661.80" x2="932.50" y2="661.80" stroke="#9A9A9A" stroke-width="1" /><line x1="883.50" y1="659.00" x2="883.50" y2="664.80" stroke="#9A9A9A" stroke-width="1" /><rect x="862.80" y="655.60" width="4.00" height="11.20" fill="#555" /><path d="M937,661.8 h8 M941,657.8 v8" fill="none" stroke="#555" stroke-width="1.6" /><text x="960.0" y="665.8" font-size="12.5" fill="#444444" textLength="20.5" lengthAdjust="spacingAndGlyphs" >66%</text><rect x="995.50" y="656.00" width="12.00" height="12.00" fill="none" stroke="#555" stroke-width="1" /><path d="M998,660.5 v-2 h2 M1003,658.5 h2 v2 M1005,663.5 v2 h-2 M1000,665.5 h-2 v-2 M999.5,662 h4.5 M1001.7,659.7 v4.6" fill="none" stroke="#555" stroke-width="0.9" />
<rect x="1025.00" y="153.00" width="1.00" height="498.00" fill="#F3F3F3" /></svg>
</body></html>
